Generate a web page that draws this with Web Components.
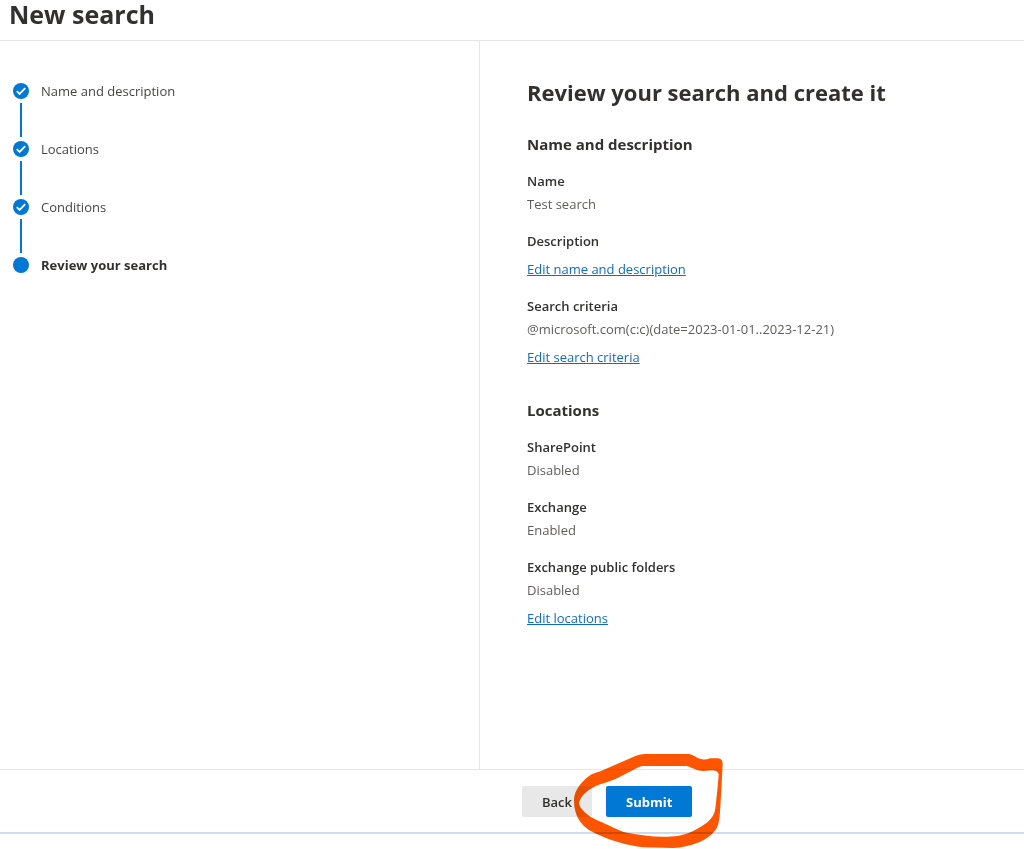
<!DOCTYPE html>
<html lang="en">
<head>
  <meta charset="utf-8">
  <meta name="viewport" content="width=device-width, initial-scale=1">
  <title>New search</title>
  <style>
    body {
      margin: 0;
      background: #fff;
      color: #323130;
      font-family: "Open Sans", "Noto Sans", sans-serif;
      font-size: 13px;
    }
  </style>
</head>
<body>
  <search-wizard heading="New search">
    <wizard-steps slot="steps">
      <wizard-step state="done">Name and description</wizard-step>
      <wizard-step state="done">Locations</wizard-step>
      <wizard-step state="done">Conditions</wizard-step>
      <wizard-step state="current">Review your search</wizard-step>
    </wizard-steps>

    <review-panel heading="Review your search and create it">
      <review-section heading="Name and description">
        <review-field label="Name">Test search</review-field>
        <review-field label="Description" link="Edit name and description"></review-field>
        <review-field label="Search criteria" link="Edit search criteria">@microsoft.com(c:c)(date=2023-01-01..2023-12-21)</review-field>
      </review-section>
      <review-section heading="Locations">
        <review-field label="SharePoint">Disabled</review-field>
        <review-field label="Exchange">Enabled</review-field>
        <review-field label="Exchange public folders" link="Edit locations">Disabled</review-field>
      </review-section>
    </review-panel>

    <wizard-button slot="actions">Back</wizard-button>
    <marker-ring slot="actions">
      <wizard-button variant="primary">Submit</wizard-button>
    </marker-ring>
  </search-wizard>

  <script>
    class SearchWizard extends HTMLElement {
      constructor() {
        super();
        this.attachShadow({ mode: 'open' });
      }

      connectedCallback() {
        const heading = this.getAttribute('heading') || '';

        this.shadowRoot.innerHTML = `
          <style>
            :host {
              display: flex;
              flex-direction: column;
              box-sizing: border-box;
              min-height: 100vh;
              padding-bottom: 15px;
            }
            header {
              padding: 0 9px 12px;
              border-bottom: 1px solid #e6e6e6;
            }
            h1 {
              margin: 0;
              font-size: 25px;
              line-height: 28px;
              font-weight: 700;
            }
            .body, footer {
              display: grid;
              grid-template-columns: 15fr 17fr;
            }
            .body {
              flex: 1;
            }
            nav {
              padding: 42px 13px;
              border-right: 1px solid #e6e6e6;
            }
            main {
              padding: 35px 47px;
            }
            footer {
              border-top: 1px solid #e6e6e6;
              border-bottom: 2px solid #cddaf0;
            }
            .actions {
              grid-column: 2;
              display: flex;
              gap: 14px;
              padding: 16px 42px 15px;
            }
          </style>

          <header><h1>${heading}</h1></header>
          <div class="body">
            <nav aria-label="Steps"><slot name="steps"></slot></nav>
            <main><slot></slot></main>
          </div>
          <footer>
            <div class="actions"><slot name="actions"></slot></div>
          </footer>
        `;
      }
    }

    class WizardSteps extends HTMLElement {
      constructor() {
        super();
        this.attachShadow({ mode: 'open' });
      }

      connectedCallback() {
        this.setAttribute('role', 'list');
        this.shadowRoot.innerHTML = `
          <style>
            :host {
              display: flex;
              flex-direction: column;
              gap: 4px;
            }
          </style>
          <slot></slot>
        `;
      }
    }

    class WizardStep extends HTMLElement {
      constructor() {
        super();
        this.attachShadow({ mode: 'open' });
      }

      connectedCallback() {
        const done = this.getAttribute('state') === 'done';
        const check = '<path d="M3.8 8.2 6.6 11 12.2 5.2" fill="none" stroke="#fff" stroke-width="1.8"/>';

        this.setAttribute('role', 'listitem');
        this.shadowRoot.innerHTML = `
          <style>
            :host {
              display: flex;
              gap: 12px;
              color: #484644;
              line-height: 16px;
            }
            :host([state="current"]) {
              color: #323130;
              font-weight: 700;
            }
            .marker {
              display: flex;
              flex-direction: column;
              align-items: center;
              gap: 4px;
            }
            svg {
              display: block;
            }
            .line {
              width: 2px;
              height: 34px;
              background: #0078d4;
            }
          </style>

          <div class="marker">
            <svg width="16" height="16" viewBox="0 0 16 16" aria-hidden="true">
              <circle cx="8" cy="8" r="8" fill="#0078d4"/>
              ${done ? check : ''}
            </svg>
            ${done ? '<span class="line"></span>' : ''}
          </div>
          <span><slot></slot></span>
        `;
      }
    }

    class ReviewPanel extends HTMLElement {
      constructor() {
        super();
        this.attachShadow({ mode: 'open' });
      }

      connectedCallback() {
        this.shadowRoot.innerHTML = `
          <style>
            :host {
              display: block;
            }
            h2 {
              margin: 0 0 24px;
              font-size: 22px;
              line-height: 32px;
              font-weight: 700;
            }
            .sections {
              display: flex;
              flex-direction: column;
              gap: 29px;
            }
          </style>
          <h2>${this.getAttribute('heading')}</h2>
          <div class="sections"><slot></slot></div>
        `;
      }
    }

    class ReviewSection extends HTMLElement {
      constructor() {
        super();
        this.attachShadow({ mode: 'open' });
      }

      connectedCallback() {
        this.shadowRoot.innerHTML = `
          <style>
            :host {
              display: block;
            }
            h3 {
              margin: 0 0 14px;
              font-size: 15px;
              line-height: 24px;
              font-weight: 700;
            }
            .fields {
              display: flex;
              flex-direction: column;
              gap: 14px;
            }
          </style>
          <h3>${this.getAttribute('heading')}</h3>
          <div class="fields"><slot></slot></div>
        `;
      }
    }

    class ReviewField extends HTMLElement {
      constructor() {
        super();
        this.attachShadow({ mode: 'open' });
      }

      connectedCallback() {
        const link = this.getAttribute('link');

        this.shadowRoot.innerHTML = `
          <style>
            :host {
              display: block;
              line-height: 23px;
            }
            .label {
              font-weight: 600;
            }
            .value {
              color: #605e5c;
              overflow-wrap: anywhere;
            }
            .edit {
              margin-top: 5px;
            }
            a {
              color: #0f6cbd;
              text-decoration: underline;
            }
          </style>
          <div class="label">${this.getAttribute('label')}</div>
          <div class="value"><slot></slot></div>
          ${link ? `<div class="edit"><a href="#">${link}</a></div>` : ''}
        `;
      }
    }

    class WizardButton extends HTMLElement {
      constructor() {
        super();
        this.attachShadow({ mode: 'open' });
      }

      connectedCallback() {
        this.shadowRoot.innerHTML = `
          <style>
            :host {
              display: block;
            }
            button {
              display: block;
              height: 31px;
              padding: 0 20px;
              border: 0;
              border-radius: 2px;
              background: #e8e8e8;
              color: #323130;
              font: inherit;
              font-weight: 600;
              cursor: pointer;
            }
            :host([variant="primary"]) button {
              background: #0078d4;
              color: #fff;
              font-weight: 700;
            }
          </style>
          <button type="button"><slot></slot></button>
        `;
      }
    }

    // Hand-drawn ring around whatever is slotted in
    class MarkerRing extends HTMLElement {
      constructor() {
        super();
        this.attachShadow({ mode: 'open' });
      }

      connectedCallback() {
        this.shadowRoot.innerHTML = `
          <style>
            :host {
              display: block;
              position: relative;
            }
            svg {
              position: absolute;
              left: -36px;
              top: -36px;
              pointer-events: none;
              mix-blend-mode: multiply;
            }
          </style>
          <slot></slot>
          <svg width="156" height="99" viewBox="210 30 468 297" aria-hidden="true">
            <path fill="#ff5500" fill-rule="evenodd" d="
              M222 180 C222 150 248 120 275 103 C286 98 298 95 310 90 L408 47 Q420 42 434 42
              L565 42 C580 42 588 55 606 58 Q618 60 630 55 L655 55 Q668 57 668 72
              L665 130 L661 200 C659 230 658 250 648 268 C630 294 596 311 560 318
              Q540 324 520 324 L430 322 C380 316 330 301 290 282 C240 260 222 225 222 180 Z
              M237 188 C243 167 265 146 300 133 C330 123 346 118 360 110 L418 80 Q424 78 430 78
              L560 78 C580 84 592 93 610 93 L638 91 Q656 92 656 106
              L652 150 L646 205 C642 238 615 256 575 275 C545 288 520 290 495 290
              C460 291 418 284 380 278 C350 270 325 254 295 242 C260 227 238 205 237 188 Z"/>
          </svg>
        `;
      }
    }

    customElements.define('search-wizard', SearchWizard);
    customElements.define('wizard-steps', WizardSteps);
    customElements.define('wizard-step', WizardStep);
    customElements.define('review-panel', ReviewPanel);
    customElements.define('review-section', ReviewSection);
    customElements.define('review-field', ReviewField);
    customElements.define('wizard-button', WizardButton);
    customElements.define('marker-ring', MarkerRing);
  </script>
</body>
</html>
